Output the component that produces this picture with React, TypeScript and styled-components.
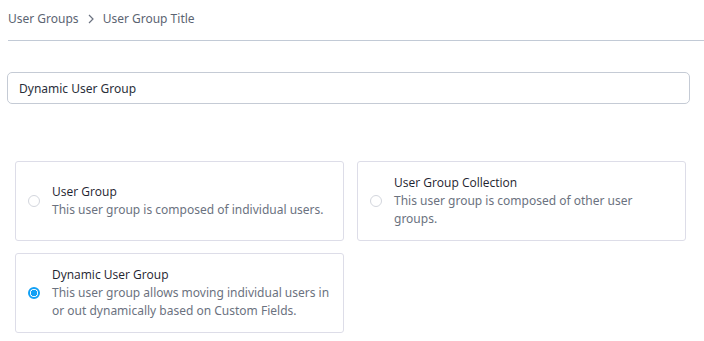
import styled, { createGlobalStyle } from "styled-components";

const GlobalStyle = createGlobalStyle`
  body {
    margin: 0;
    background: #ffffff;
    font-family: "Noto Sans", "Open Sans", sans-serif;
  }
`;

const Page = styled.div`
  padding: 0 0 0 7px;
`;

const Breadcrumb = styled.nav`
  display: flex;
  align-items: center;
  gap: 8px;
  height: 41px;
  padding: 0 0 4px 0;
  margin-left: 1px;
  box-sizing: border-box;
  font-size: 12px;
  color: #5b6472;
  border-bottom: 1px solid #c2cad6;
`;

const Chevron = styled.svg`
  width: 8px;
  height: 10px;
  margin-top: 1px;
`;

const NameInput = styled.input`
  display: block;
  box-sizing: border-box;
  width: 683px;
  height: 32px;
  margin-top: 31px;
  padding: 0 11px;
  border: 1px solid #c5cbd5;
  border-radius: 5px;
  font-family: inherit;
  font-size: 12px;
  color: #2a2f3a;
  outline: none;
`;

const Options = styled.div`
  display: grid;
  grid-template-columns: 329px 329px;
  column-gap: 13px;
  row-gap: 12px;
  margin: 57px 0 0 8px;
`;

const Card = styled.label`
  display: flex;
  align-items: center;
  gap: 12px;
  box-sizing: border-box;
  height: 80px;
  padding: 0 12px 0 12px;
  border: 1px solid #dddde8;
  border-radius: 3px;
  cursor: pointer;
`;

const Radio = styled.span<{ $checked?: boolean }>`
  flex: none;
  box-sizing: border-box;
  width: 12px;
  height: 12px;
  border-radius: 50%;
  border: ${(p) => (p.$checked ? "2px solid #12a0f5" : "1px solid #d3d6dd")};
  background: ${(p) =>
    p.$checked ? "radial-gradient(circle, #12a0f5 0 3px, #fff 3.5px)" : "#fff"};
`;

const Text = styled.div`
  display: flex;
  flex-direction: column;
`;

const Title = styled.div`
  font-family: "Open Sans", "Noto Sans", sans-serif;
  font-size: 12px;
  font-weight: 500;
  color: #1e2430;
  line-height: 18px;
`;

const Desc = styled.div`
  font-size: 12px;
  color: #6b7280;
  line-height: 18px;
`;

const options = [
  {
    title: "User Group",
    desc: "This user group is composed of individual users.",
    checked: false,
  },
  {
    title: "User Group Collection",
    desc: "This user group is composed of other user groups.",
    checked: false,
  },
  {
    title: "Dynamic User Group",
    desc: "This user group allows moving individual users in or out dynamically based on Custom Fields.",
    checked: true,
  },
];

export default function App() {
  return (
    <Page>
      <GlobalStyle />
      <Breadcrumb>
        <span>User Groups</span>
        <Chevron viewBox="0 0 8 10">
          <path d="M2 1l4 4-4 4" fill="none" stroke="#6b7280" strokeWidth="1.2" />
        </Chevron>
        <span>User Group Title</span>
      </Breadcrumb>
      <NameInput defaultValue="Dynamic User Group" />
      <Options>
        {options.map((o) => (
          <Card key={o.title}>
            <Radio $checked={o.checked} />
            <Text>
              <Title>{o.title}</Title>
              <Desc>{o.desc}</Desc>
            </Text>
          </Card>
        ))}
      </Options>
    </Page>
  );
}
